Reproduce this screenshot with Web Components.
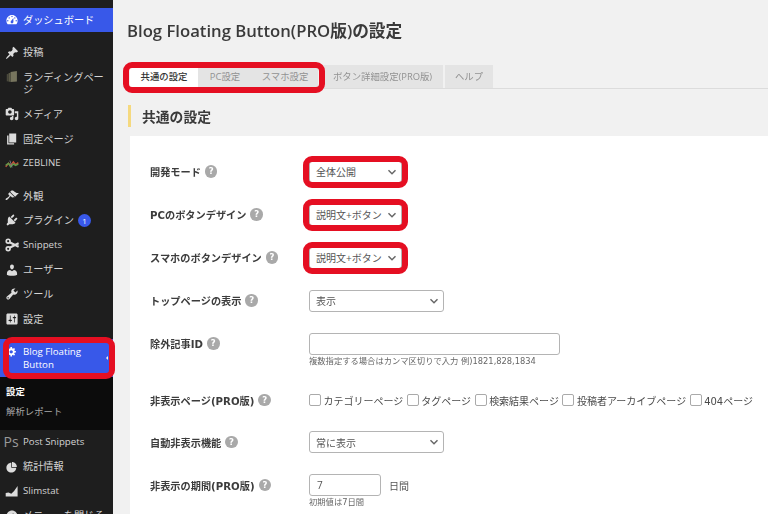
<!DOCTYPE html>
<html lang="ja">
<head>
<meta charset="utf-8">
<title>Blog Floating Button(PRO版)の設定</title>
<style>
html, body { margin: 0; height: 514px; overflow: hidden; background: #f1f1f1; }
body { font-family: "Open Sans", "Noto Sans CJK JP", sans-serif; color: #3c434a; }
</style>
</head>
<body>
<admin-shell>
  <admin-menu slot="menu">
    <menu-item icon="dashboard" active>ダッシュボード</menu-item>
    <menu-gap></menu-gap>
    <menu-item icon="post">投稿</menu-item>
    <menu-item icon="landing" style="padding-bottom: 6.400px">ランディングページ</menu-item>
    <menu-item icon="media">メディア</menu-item>
    <menu-item icon="page">固定ページ</menu-item>
    <menu-item icon="zebline" latin>ZEBLINE</menu-item>
    <menu-gap style="height: 7.600px"></menu-gap>
    <menu-item icon="brush">外観</menu-item>
    <menu-item icon="plugin" badge="1">プラグイン</menu-item>
    <menu-item icon="scissors" latin>Snippets</menu-item>
    <menu-item icon="user">ユーザー</menu-item>
    <menu-item icon="tool">ツール</menu-item>
    <menu-item icon="settings">設定</menu-item>
    <menu-gap></menu-gap>
    <red-mark style="--ring: -2px -2px -2px 3px; display: block">
      <menu-item icon="gear" active arrow latin style="line-height: 13px">Blog Floating Button</menu-item>
    </red-mark>
    <sub-menu>
      <a class="on">設定</a>
      <a>解析レポート</a>
    </sub-menu>
    <menu-item icon="ps" latin>Post Snippets</menu-item>
    <menu-item icon="pie">統計情報</menu-item>
    <menu-item icon="slimstat" latin>Slimstat</menu-item>
    <menu-item icon="collapse">メニューを閉じる</menu-item>
  </admin-menu>

  <page-title>Blog Floating Button(PRO版)の設定</page-title>
  <tab-bar>
    <red-mark style="--ring: -3px -7px -5px -7px">
      <tab-item width="68" active>共通の設定</tab-item>
      <tab-item width="54">PC設定</tab-item>
      <tab-item width="66">スマホ設定</tab-item>
    </red-mark>
    <tab-item width="121">ボタン詳細設定(PRO版)</tab-item>
    <tab-item width="48">ヘルプ</tab-item>
  </tab-bar>
  <section-heading>共通の設定</section-heading>

  <settings-card>
    <settings-row label="開発モード">
      <red-mark style="--ring: -5px -6px"><select-box width="93">全体公開</select-box></red-mark>
    </settings-row>
    <settings-row label="PCのボタンデザイン">
      <red-mark style="--ring: -5px -6px"><select-box width="93">説明文+ボタン</select-box></red-mark>
    </settings-row>
    <settings-row label="スマホのボタンデザイン">
      <red-mark style="--ring: -5px -6px"><select-box width="93">説明文+ボタン</select-box></red-mark>
    </settings-row>
    <settings-row label="トップページの表示">
      <select-box width="135">表示</select-box>
    </settings-row>
    <settings-row label="除外記事ID" hint="複数指定する場合はカンマ区切りで入力 例)1821,828,1834">
      <text-box width="251"></text-box>
    </settings-row>
    <settings-row label="非表示ページ(PRO版)" compact>
      <check-box>カテゴリーページ</check-box>
      <check-box>タグページ</check-box>
      <check-box>検索結果ページ</check-box>
      <check-box>投稿者アーカイブページ</check-box>
      <check-box>404ページ</check-box>
    </settings-row>
    <settings-row label="自動非表示機能">
      <select-box width="135">常に表示</select-box>
    </settings-row>
    <settings-row label="非表示の期間(PRO版)" hint="初期値は7日間">
      <text-box width="72" unit="日間">7</text-box>
    </settings-row>
  </settings-card>
</admin-shell>

<script>
const ICONS = {
  dashboard: '<path d="M3.76 16h12.48c1.1-1.37 1.76-3.11 1.76-5 0-4.42-3.58-8-8-8s-8 3.58-8 8c0 1.89.66 3.63 1.76 5zM10 4c.55 0 1 .45 1 1s-.45 1-1 1-1-.45-1-1 .45-1 1-1zM6 6c.55 0 1 .45 1 1s-.45 1-1 1-1-.45-1-1 .45-1 1-1zm8 0c.55 0 1 .45 1 1s-.45 1-1 1-1-.45-1-1 .45-1 1-1zm-5.37 5.55L12 7v6c0 1.1-.9 2-2 2s-2-.9-2-2c0-.57.24-1.08.63-1.45zM4 10c.55 0 1 .45 1 1s-.45 1-1 1-1-.45-1-1 .45-1 1-1zm12 0c.55 0 1 .45 1 1s-.45 1-1 1-1-.45-1-1 .45-1 1-1z" fill-rule="evenodd"/>',
  post: '<path d="M10.44 3.02l1.82-1.82 6.36 6.35-1.83 1.82c-1.05-.68-2.48-.57-3.41.36l-.75.75c-.92.93-1.04 2.35-.35 3.41l-1.83 1.82-2.41-2.41-2.8 2.79c-.42.42-3.38 2.71-3.8 2.29s1.86-3.39 2.28-3.81l2.79-2.79L4.1 9.36l1.83-1.82c1.05.69 2.48.57 3.4-.36l.75-.75c.93-.92 1.05-2.35.36-3.41z"/>',
  landing: '<path fill="#77755e" d="M8 3l9-1.500v15L8 17z"/><path fill="#5c5b48" d="M5 4.500l3-.5v13l-3-.5z"/><path fill="#4a493c" d="M2.500 6L5 5.500v11L2.500 16z"/>',
  media: '<path d="M13 11V4c0-.55-.45-1-1-1h-1.670L9 1H5L3.670 3H2c-.55 0-1 .45-1 1v7c0 .55.45 1 1 1h10c.55 0 1-.45 1-1zM7 4.500c1.380 0 2.500 1.120 2.500 2.500S8.380 9.500 7 9.500 4.500 8.380 4.500 7 5.620 4.500 7 4.500zM14 6h5v10.500c0 1.380-1.120 2.500-2.500 2.500S14 17.880 14 16.500s1.120-2.500 2.500-2.500c.17 0 .34.020.5.050V9h-3V6zm-4 8.050V13h2v3.500c0 1.380-1.120 2.500-2.500 2.500S7 17.880 7 16.500 8.120 14 9.500 14c.17 0 .34.020.5.050z" fill-rule="evenodd"/>',
  page: '<path d="M6 15V2h10v13H6zm-1 1h8v2H3V5h2v11z"/>',
  zebline: '<path fill="none" stroke="#c9503a" stroke-width="2" d="M1 14l4-5 3 3 4-5 3 4 4-3"/><path fill="none" stroke="#5f9a4a" stroke-width="2" d="M1 12l4-3 3 5 4-4 3 2 4-2"/><path fill="none" stroke="#7b8290" stroke-width="1.200" d="M7 5l3 10"/>',
  brush: '<path d="M14.480 11.060L7.410 3.990l1.500-1.500c.5-.56 2.300-.47 3.510.32 1.210.8 1.430 1.280 2.910 2.100 1.180.64 2.450 1.260 4.450.85zm-.71.71L6.700 4.700 4.930 6.470c-.39.39-.39 1.020 0 1.410l1.060 1.060c.39.39.39 1.030 0 1.420-.6.6-1.430 1.110-2.210 1.690-.35.26-.7.53-1.010.84C1.430 13.230.4 14.850 1.100 15.550c.7.7 2.300-.33 3.650-1.660.3-.31.58-.66.84-1.010.58-.78 1.090-1.610 1.690-2.210.39-.39 1.030-.39 1.420 0l1.060 1.060c.39.39 1.020.39 1.410 0z"/>',
  plugin: '<path d="M13.110 4.360L9.870 7.600 8 5.730l3.240-3.240c.35-.34 1.050-.2 1.560.32.52.51.66 1.210.31 1.550zm-8 1.770l.91-1.120 9.010 9.010-1.190.84c-.71.71-2.630 1.160-3.820 1.160H6.140L4.900 17.260c-.59.59-1.540.59-2.120 0-.59-.58-.59-1.530 0-2.120l1.240-1.240v-3.880c0-1.130.4-3.190 1.090-3.890zm7.260 3.970l3.240-3.240c.34-.35 1.040-.21 1.550.31.52.51.66 1.210.31 1.550l-3.240 3.250z"/>',
  scissors: '<circle cx="4.500" cy="4.500" r="2.700" fill="none" stroke="currentColor" stroke-width="2.400"/><circle cx="4.500" cy="15.500" r="2.700" fill="none" stroke="currentColor" stroke-width="2.400"/><path fill="none" stroke="currentColor" stroke-width="3" d="M6.500 6L19.500 12.500M6.500 14L19.500 7.500"/>',
  user: '<path d="M10 9.250c-2.270 0-2.730-3.440-2.730-3.440C7 4.020 7.820 2 9.970 2c2.160 0 2.980 2.020 2.710 3.810 0 0-.41 3.440-2.680 3.440zm0 2.570L12.720 10c2.390 0 4.520 2.330 4.520 4.530v2.490s-3.650 1.130-7.240 1.130c-3.650 0-7.240-1.130-7.240-1.130v-2.490c0-2.250 1.940-4.480 4.470-4.480z"/>',
  tool: '<path d="M16.680 9.770c-1.340 1.340-3.300 1.670-4.950.99l-5.410 6.520c-.99.99-2.590.99-3.580 0s-.99-2.590 0-3.570l6.520-5.420c-.68-1.650-.35-3.610.99-4.950 1.280-1.280 3.120-1.620 4.720-1.060l-2.890 2.890 2.820 2.820 2.860-2.870c.53 1.580.18 3.390-1.080 4.650zM3.810 16.210c.4.39 1.040.39 1.430 0 .4-.4.4-1.040 0-1.430-.39-.4-1.030-.4-1.430 0-.39.39-.39 1.030 0 1.430z" fill-rule="evenodd"/>',
  settings: '<path d="M18 16V4c0-1.100-.9-2-2-2H4c-1.100 0-2 .9-2 2v12c0 1.100.9 2 2 2h12c1.100 0 2-.9 2-2zM8 11h1c.55 0 1 .45 1 1s-.45 1-1 1H8v1.500c0 .28-.22.5-.5.5s-.5-.22-.5-.5V13H6c-.55 0-1-.45-1-1s.45-1 1-1h1V5.500c0-.28.22-.5.5-.5s.5.22.5.5V11zm5-2h-1c-.55 0-1-.45-1-1s.45-1 1-1h1V5.500c0-.28.22-.5.5-.5s.5.22.5.5V7h1c.55 0 1 .45 1 1s-.45 1-1 1h-1v5.500c0 .28-.22.5-.5.5s-.5-.22-.5-.5V9z" fill-rule="evenodd"/>',
  gear: '<path d="M18 12h-2.180c-.17.7-.44 1.350-.81 1.930l1.540 1.540-2.100 2.100-1.540-1.540c-.58.36-1.230.64-1.910.81V19H8v-2.180c-.68-.17-1.330-.45-1.910-.81l-1.540 1.540-2.120-2.120 1.540-1.540c-.36-.58-.64-1.230-.8-1.890H1V9.020h2.180c.16-.7.44-1.350.8-1.940L2.440 5.540l2.120-2.120L6.100 4.960c.58-.36 1.230-.64 1.900-.8V2h3v2.160c.68.160 1.330.44 1.910.8l1.540-1.540 2.120 2.120-1.540 1.540c.36.590.64 1.240.8 1.940H18V12zm-8.500 1.500c1.660 0 3-1.340 3-3s-1.340-3-3-3-3 1.340-3 3 1.340 3 3 3z" fill-rule="evenodd"/>',
  pie: '<path d="M10 10V3c3.870 0 7 3.130 7 7h-7zM9 4v7h7c0 3.870-3.130 7-7 7s-7-3.130-7-7 3.130-7 7-7z"/>',
  slimstat: '<path d="M1 18v-5l4-1 4 2 4-4 5-7v15z"/>',
  collapse: '<path d="M10 2.160c4.330 0 7.840 3.510 7.840 7.840s-3.510 7.840-7.840 7.840S2.160 14.330 2.160 10 5.710 2.160 10 2.160zm2 11.720V6.120L6.180 9.970z" fill-rule="evenodd"/>'
};

// small helper so each element only has to give its styles and markup
class ShadowEl extends HTMLElement {
  constructor() {
    super();
    this.attachShadow({ mode: "open" });
  }
  connectedCallback() {
    this.shadowRoot.innerHTML = `<style>${this.css()}</style>${this.html()}`;
  }
  css() { return ":host { display: block; }"; }
  html() { return "<slot></slot>"; }
}

customElements.define("admin-shell", class extends ShadowEl {
  css() {
    return `
:host { display: flex; width: 768px; height: 514px; overflow: hidden; filter: blur(.3px); }
.menu { flex: 0 0 113px; position: relative; z-index: 1; }
main { flex: 1; min-width: 0; padding-top: 19px; }`;
  }
  html() {
    return `<div class="menu"><slot name="menu"></slot></div><main><slot></slot></main>`;
  }
});

customElements.define("admin-menu", class extends ShadowEl {
  css() {
    return `:host { display: block; height: 514px; background: #1e1e1e; padding-top: 8px; box-sizing: border-box; }`;
  }
});

customElements.define("menu-gap", class extends ShadowEl {
  css() { return `:host { display: block; height: 8.400px; }`; }
  html() { return ""; }
});

customElements.define("menu-item", class extends ShadowEl {
  css() {
    return `
:host { display: flex; align-items: center; box-sizing: border-box; min-height: 24.600px; padding: 5.600px 0; font-size: 10.200px; line-height: 12.600px; color: #d4d4d4; position: relative; }
:host([latin]) { font-size: 9.700px; }
:host([active]) { background: #3858e9; color: #fff; }
:host([icon="dashboard"]) { min-height: 24px; }
.icon { flex: 0 0 23px; height: 12.600px; display: flex; justify-content: center; align-items: center; }
:host([icon="landing"]) .icon { align-self: flex-start; }
:host([icon="gear"]) .icon { align-self: flex-start; justify-content: flex-end; padding-right: 6px; box-sizing: border-box; }
svg { flex: none; width: 14px; height: 14px; fill: currentColor; color: #dcdcdc; }
:host([active]) svg { color: #fff; }
:host([icon="gear"]) svg { width: 11px; height: 11px; }
.ps { font-size: 14px; color: #9a9a9a; line-height: 14px; margin-left: -1px; }
.label { width: 84px; }
.badge { position: absolute; left: 78px; top: 6px; width: 13px; height: 13px; border-radius: 50%; background: #3858e9; color: #fff; font-size: 8px; line-height: 13px; text-align: center; }
.arrow { position: absolute; right: 5px; top: 17px; width: 0; height: 0; border: 2px solid transparent; border-right-color: #f1f1f1; }`;
  }
  html() {
    const name = this.getAttribute("icon");
    const glyph = name === "ps" ? `<span class="ps">Ps</span>` : `<svg viewBox="0 0 20 20">${ICONS[name] || ""}</svg>`;
    const badge = this.getAttribute("badge");
    return `<span class="icon">${glyph}</span><span class="label"><slot></slot></span>` +
      (badge ? `<span class="badge">${badge}</span>` : "") +
      (this.hasAttribute("arrow") ? `<span class="arrow"></span>` : "");
  }
});

customElements.define("sub-menu", class extends ShadowEl {
  css() {
    return `
:host { display: block; background: #0c0c0c; padding: 5.500px 0 7.500px 6px; font-size: 9.400px; line-height: 20px; color: #a9a9a9; }
::slotted(a) { display: block; }
::slotted(a.on) { color: #fff; font-weight: 700; }`;
  }
});

// the red annotation outline that lies over whatever it wraps
customElements.define("red-mark", class extends ShadowEl {
  css() {
    return `
:host { display: inline-flex; position: relative; vertical-align: top; }
.ring { position: absolute; inset: var(--ring, -5px); border: 6px solid #e50f22; border-radius: 9px; pointer-events: none; z-index: 2; }`;
  }
  html() { return `<slot></slot><div class="ring"></div>`; }
});

customElements.define("page-title", class extends ShadowEl {
  css() {
    return `:host { display: block; margin-left: 14px; font-size: 16.700px; font-weight: 600; line-height: 24px; color: #3a3a3a; }`;
  }
});

customElements.define("tab-bar", class extends ShadowEl {
  css() {
    return `:host { display: flex; align-items: flex-end; gap: 2px; margin: 22px 0 0 17px; height: 23px; border-bottom: 1px solid #dcdcdc; }
::slotted(red-mark) { margin-right: 2px; }`;
  }
});

customElements.define("tab-item", class extends ShadowEl {
  css() {
    return `
:host { display: block; box-sizing: border-box; height: 23px; background: #e4e4e4; font-size: 9.400px; line-height: 24px; color: #929292; white-space: nowrap; text-align: center; }
:host([active]) { background: #fff; color: #333; font-weight: 500; }`;
  }
  html() {
    this.style.width = this.getAttribute("width") + "px";
    return "<slot></slot>";
  }
});

customElements.define("section-heading", class extends ShadowEl {
  css() {
    return `:host { display: block; margin: 16px 0 9px 15px; padding: 1px 0 0 11px; border-left: 3px solid #f5d97f; font-size: 13.800px; font-weight: 700; line-height: 21px; color: #3a3a3a; }`;
  }
});

customElements.define("settings-card", class extends ShadowEl {
  css() {
    return `:host { display: block; margin-left: 17px; padding: 14px 0 0 20px; background: #fff; min-height: 378px; box-sizing: border-box; }`;
  }
});

customElements.define("settings-row", class extends ShadowEl {
  css() {
    return `
:host { display: grid; grid-template-columns: 159px 1fr; padding: 10.500px 0; }
:host([hint]) { padding-bottom: 16px; }
:host([compact]) { padding: 9.500px 0 11.500px; }
.label { display: flex; align-items: center; gap: 4px; height: 22px; font-family: "DejaVu Sans", "Noto Sans CJK JP", sans-serif; font-size: 10.200px; font-weight: 700; color: #3c3c3c; white-space: nowrap; }
:host([compact]) .label { height: 18px; }
.q { flex: 0 0 12.500px; height: 12.500px; border-radius: 50%; background: #a9a9a9; color: #fff; font-size: 8.500px; font-weight: 700; line-height: 12.500px; text-align: center; }
.field { display: flex; align-items: center; gap: 3.500px; white-space: nowrap; }
:host([compact]) .field { height: 18px; }
.hint { font-family: "DejaVu Sans", "Noto Sans CJK JP", sans-serif; font-size: 8.300px; line-height: 10px; margin-top: 1px; color: #666; white-space: nowrap; }`;
  }
  html() {
    const hint = this.getAttribute("hint");
    return `<div class="label">${this.getAttribute("label")}<span class="q">?</span></div>
      <div><div class="field"><slot></slot></div>${hint ? `<div class="hint">${hint}</div>` : ""}</div>`;
  }
});

customElements.define("select-box", class extends ShadowEl {
  css() {
    return `
:host { display: flex; align-items: center; justify-content: space-between; box-sizing: border-box; height: 22px; padding: 0 4px 0 6px; background: #fff; border: 1px solid #b4b4b4; border-radius: 3px; font-size: 10px; color: #555; white-space: nowrap; }
svg { width: 10px; height: 10px; fill: none; stroke: #666; stroke-width: 1.400; }`;
  }
  html() {
    this.style.width = this.getAttribute("width") + "px";
    return `<span><slot></slot></span><svg viewBox="0 0 10 10"><path d="M1.500 3.200L5 6.800l3.500-3.600"/></svg>`;
  }
});

customElements.define("text-box", class extends ShadowEl {
  css() {
    return `
:host { display: inline-flex; align-items: center; gap: 8px; font-size: 10px; color: #555; }
.box { box-sizing: border-box; height: 22px; padding: 0 7px; line-height: 20px; background: #fff; border: 1px solid #b4b4b4; border-radius: 3px; }`;
  }
  html() {
    const unit = this.getAttribute("unit");
    return `<div class="box" style="width:${this.getAttribute("width")}px"><slot></slot></div>${unit ? `<span>${unit}</span>` : ""}`;
  }
});

customElements.define("check-box", class extends ShadowEl {
  css() {
    return `
:host { display: inline-flex; align-items: center; gap: 2.500px; font-family: "DejaVu Sans", "Noto Sans CJK JP", sans-serif; font-size: 10px; color: #4a4a4a; }
.box { width: 10px; height: 10px; border: 1px solid #aaa; border-radius: 2px; background: #fff; }`;
  }
  html() { return `<span class="box"></span><slot></slot>`; }
});
</script>
</body>
</html>
